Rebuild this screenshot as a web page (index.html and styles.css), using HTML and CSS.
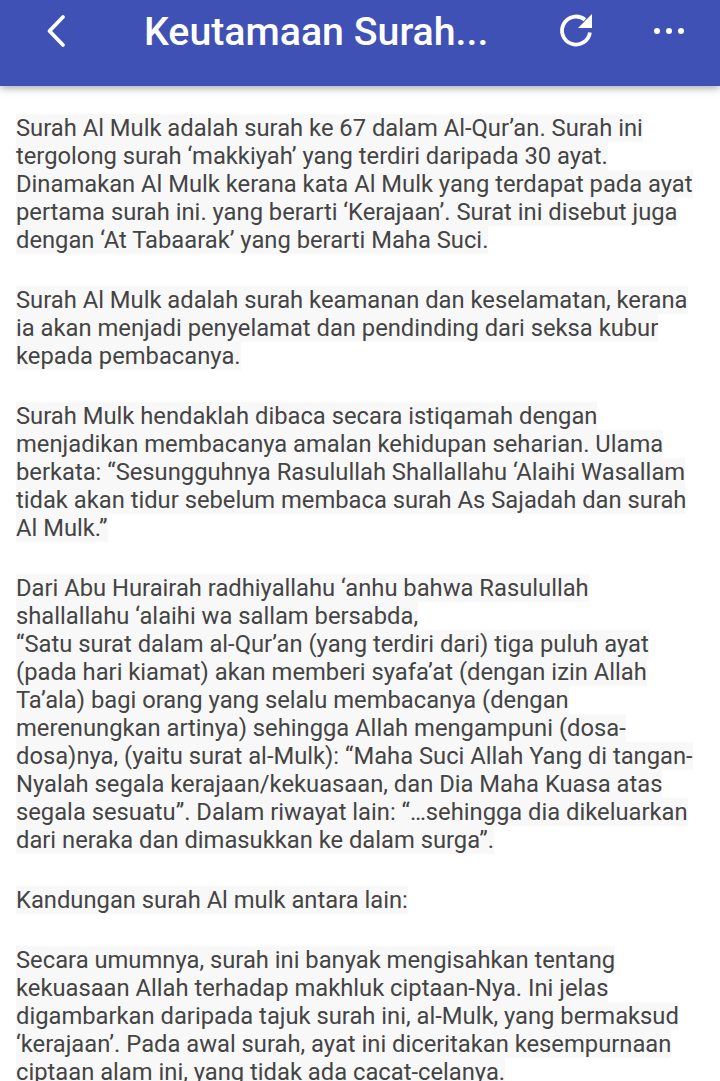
FILE: index.html
```html
<!DOCTYPE html>
<html lang="id">
<head>
<meta charset="utf-8">
<title>Keutamaan Surah</title>
<link rel="stylesheet" href="styles.css">
</head>
<body>
<header class="bar">
  <button class="btn btn-back" aria-label="Kembali">
    <svg width="24" height="36" viewBox="0 0 24 36"><path d="M19 3 L5.5 17 L19 31" fill="none" stroke="#fff" stroke-width="3.8" stroke-linecap="round" stroke-linejoin="round"/></svg>
  </button>
  <h1 class="title">Keutamaan Surah...</h1>
  <button class="btn btn-refresh" aria-label="Muat semula">
    <svg width="36" height="36" viewBox="0 0 36 36"><path d="M31.9 19.5A14 14 0 1 1 27 6.8" fill="none" stroke="#fff" stroke-width="3.8"/><path d="M34 1V15H20Z" fill="#fff"/></svg>
  </button>
  <button class="btn btn-more" aria-label="Lainnya">
    <span class="dot"></span><span class="dot"></span><span class="dot"></span>
  </button>
</header>
<main class="content">
  <p><span>Surah Al Mulk adalah surah ke 67 dalam Al-Qur’an. Surah ini tergolong surah ‘makkiyah’ yang terdiri daripada 30 ayat. Dinamakan Al Mulk kerana kata Al Mulk yang terdapat pada ayat pertama surah ini. yang berarti ‘Kerajaan’. Surat ini disebut juga dengan ‘At Tabaarak’ yang berarti Maha Suci.</span></p>
  <p><span>Surah Al Mulk adalah surah keamanan dan keselamatan, kerana ia akan menjadi penyelamat dan pendinding dari seksa kubur kepada pembacanya.</span></p>
  <p><span>Surah Mulk hendaklah dibaca secara istiqamah dengan menjadikan membacanya amalan kehidupan seharian. Ulama berkata: “Sesungguhnya Rasulullah Shallallahu ‘Alaihi Wasallam tidak akan tidur sebelum membaca surah As Sajadah dan surah Al Mulk.”</span></p>
  <p><span>Dari Abu Hurairah radhiyallahu ‘anhu bahwa Rasulullah shallallahu ‘alaihi wa sallam bersabda,<br>“Satu surat dalam al-Qur’an (yang terdiri dari) tiga puluh ayat (pada hari kiamat) akan memberi syafa’at (dengan izin Allah Ta’ala) bagi orang yang selalu membacanya (dengan merenungkan artinya) sehingga Allah mengampuni (dosa-dosa)nya, (yaitu surat al-Mulk): “Maha Suci Allah Yang di tangan-Nyalah segala kerajaan/kekuasaan, dan Dia Maha Kuasa atas segala sesuatu”. Dalam riwayat lain: “…sehingga dia dikeluarkan dari neraka dan dimasukkan ke dalam surga”.</span></p>
  <p><span>Kandungan surah Al mulk antara lain:</span></p>
  <p><span>Secara umumnya, surah ini banyak mengisahkan tentang kekuasaan Allah terhadap makhluk ciptaan-Nya. Ini jelas digambarkan daripada tajuk surah ini, al-Mulk, yang bermaksud ‘kerajaan’. Pada awal surah, ayat ini diceritakan kesempurnaan ciptaan alam ini, yang tidak ada cacat-celanya.</span></p>
</main>
</body>
</html>
```
FILE: styles.css
```css
* { box-sizing: border-box; }
html, body { margin: 0; height: 100%; }
body {
  height: 1081px;
  overflow: hidden;
  background: #fff;
  font-family: Roboto, "Liberation Sans", sans-serif;
}
.bar {
  display: flex;
  align-items: flex-start;
  height: 86px;
  background: #3f51b5;
  box-shadow: 0 2px 8px rgba(0, 0, 0, 0.35);
  color: #fff;
  position: relative;
}
.btn {
  display: flex;
  align-items: center;
  justify-content: center;
  padding: 0;
  border: 0;
  background: none;
}
.btn-back { width: 40px; height: 36px; margin: 14px 0 0 36px; }
.title {
  width: 342px;
  margin: 10px 0 0 68px;
  font-size: 39.3px;
  font-weight: 500;
  line-height: 44px;
  white-space: nowrap;
}
.btn-refresh { width: 36px; height: 36px; margin: 13px 0 0 72px; }
.btn-more { gap: 6px; width: 36px; height: 12px; margin: 25px 0 0 57px; }
.dot { width: 6px; height: 6px; border-radius: 50%; background: #fff; }
.content { padding: 28px 16px 0; }
.content p {
  margin: 0 0 32px;
  font-size: 23.76px;
  line-height: 28px;
  color: #444;
}
.content span { background: #f8f8f8; }
```
